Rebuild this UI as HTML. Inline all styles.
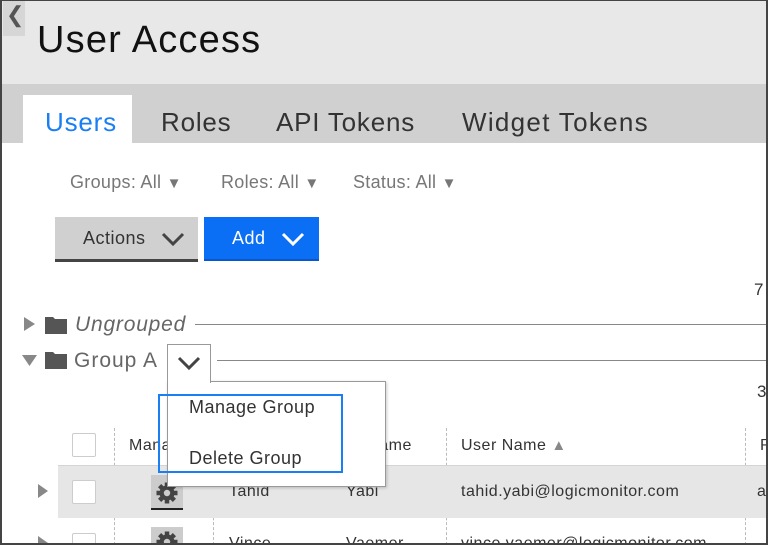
<!DOCTYPE html>
<html><head><style>
*{margin:0;padding:0;box-sizing:border-box}
html,body{width:768px;height:545px;overflow:hidden}
body{background:#fff;font-family:"Liberation Sans",sans-serif;position:relative}
.a{position:absolute;white-space:nowrap}
.frame{position:absolute;left:0;top:0;width:768px;height:545px;border:1px solid #444;border-left-width:2px;border-right-width:2px;border-bottom-width:2px;pointer-events:none;z-index:50}
.cb{position:absolute;width:24px;height:24px;border:1px solid #ccc;border-radius:2px;background:#fff}
.dv{position:absolute;width:0;border-left:1px dashed #bbb}
.t{color:#333;font-size:16px;letter-spacing:0.5px}
.tab{font-size:26px;letter-spacing:0.8px}
</style></head><body>
<div class="a" style="left:0;top:0;width:768px;height:84px;background:#e8e8e8"></div>
<div class="a" style="left:3px;top:0;width:22px;height:36px;background:#d6d6d6"></div>
<div class="a" style="left:6px;top:2px;font-size:22px;color:#555">&#10094;</div>
<div class="a" style="left:37px;top:19px;font-size:38px;letter-spacing:1.2px;color:#111">User Access</div>
<div class="a" style="left:0;top:84px;width:768px;height:59px;background:#d0d0d0"></div>
<div class="a" style="left:23px;top:95px;width:109px;height:48px;background:#fff"></div>
<div class="a tab" style="left:45px;top:107px;color:#1a7ef5">Users</div>
<div class="a tab" style="left:161px;top:107px;color:#333">Roles</div>
<div class="a tab" style="left:276px;top:107px;color:#333">API Tokens</div>
<div class="a tab" style="left:462px;top:107px;color:#333;letter-spacing:1.3px">Widget Tokens</div>

<div class="a" style="left:70px;top:172px;font-size:18px;letter-spacing:0.3px;color:#777">Groups: All <span style="font-size:15px">&#9660;</span></div>
<div class="a" style="left:221px;top:172px;font-size:18px;letter-spacing:0.3px;color:#777">Roles: All <span style="font-size:15px">&#9660;</span></div>
<div class="a" style="left:353px;top:172px;font-size:18px;letter-spacing:0.3px;color:#777">Status: All <span style="font-size:15px">&#9660;</span></div>

<div class="a" style="left:55px;top:217px;width:143px;height:45px;background:#d0d0d0;border-bottom:3px solid #444"></div>
<div class="a" style="left:83px;top:228px;font-size:18px;letter-spacing:0.5px;color:#333">Actions</div>
<svg class="a" style="left:161px;top:231px" width="24" height="16"><path d="M2 3 L12 13 L22 3" stroke="#444" stroke-width="3" fill="none"/></svg>
<div class="a" style="left:204px;top:217px;width:115px;height:44px;background:#0a6ff5;border-bottom:2px solid #0a58c8"></div>
<div class="a" style="left:232px;top:228px;font-size:18px;letter-spacing:0.5px;color:#fff">Add</div>
<svg class="a" style="left:281px;top:231px" width="24" height="16"><path d="M2 3 L12 13 L22 3" stroke="#fff" stroke-width="3" fill="none"/></svg>

<div class="a" style="left:754px;top:280px;font-size:17px;color:#333">7</div>
<svg class="a" style="left:22px;top:316px" width="16" height="16"><path d="M2 1 L13 8 L2 15Z" fill="#888"/></svg>
<svg class="a" style="left:45px;top:315px" width="22" height="19"><path d="M0 2h8l2 2h12v15H0z" fill="#555"/></svg>
<div class="a" style="left:75px;top:313px;font-size:21px;letter-spacing:0.8px;font-style:italic;color:#666">Ungrouped</div>
<div class="a" style="left:195px;top:324px;width:571px;height:1px;background:#888"></div>

<svg class="a" style="left:22px;top:354px" width="16" height="14"><path d="M0 1 L15 1 L7.5 12Z" fill="#888"/></svg>
<svg class="a" style="left:45px;top:350px" width="22" height="19"><path d="M0 2h8l2 2h12v15H0z" fill="#555"/></svg>
<div class="a" style="left:74px;top:349px;font-size:21px;letter-spacing:1px;color:#666">Group A</div>
<div class="a" style="left:217px;top:360px;width:549px;height:1px;background:#888"></div>

<div class="a" style="left:167px;top:381px;width:219px;height:106px;background:#fff;border:1px solid #999;box-shadow:1px 1px 3px rgba(0,0,0,.2);z-index:5"></div>
<div class="a" style="left:167px;top:344px;width:44px;height:39px;background:#fff;border:1px solid #999;border-bottom:none;z-index:6"></div>
<svg class="a" style="left:177px;top:355px;z-index:7" width="24" height="16"><path d="M2 3 L12 13 L22 3" stroke="#444" stroke-width="3" fill="none"/></svg>
<div class="a" style="left:158px;top:394px;width:185px;height:79px;border:2px solid #1a7ef5;z-index:8"></div>
<div class="a" style="left:189px;top:397px;font-size:18px;letter-spacing:0.5px;color:#333;z-index:8">Manage Group</div>
<div class="a" style="left:189px;top:448px;font-size:18px;letter-spacing:0.5px;color:#333;z-index:8">Delete Group</div>

<div class="a" style="left:757px;top:382px;font-size:17px;color:#333">3</div>

<div class="cb" style="left:72px;top:433px"></div>
<div class="dv" style="left:114px;top:428px;height:117px"></div>
<div class="dv" style="left:213px;top:428px;height:117px"></div>
<div class="dv" style="left:446px;top:428px;height:117px"></div>
<div class="dv" style="left:745px;top:428px;height:117px"></div>
<div class="a t" style="left:129px;top:437px">Manage</div>
<div class="a t" style="left:330px;top:437px">Last Name</div>
<div class="a t" style="left:461px;top:437px">User Name <span style="color:#888;font-size:15px">&#9650;</span></div>
<div class="a t" style="left:760px;top:437px">R</div>

<div class="a" style="left:58px;top:465px;width:710px;height:53px;background:#e6e6e6;border-top:1px solid #d4d4d4"></div>
<svg class="a" style="left:37px;top:484px" width="12" height="14"><path d="M1 0 L11 7 L1 14Z" fill="#888"/></svg>
<div class="cb" style="left:72px;top:480px"></div>
<div class="a" style="left:151px;top:475px;width:32px;height:35px;background:#ccc;border-bottom:2px solid #222"></div>
<svg class="a" style="left:155px;top:481px" width="24" height="24" viewBox="0 0 24 24"><g fill="#444"><circle cx="12" cy="12" r="7.5"/><g stroke="#444" stroke-width="4.5"><line x1="12" y1="1.5" x2="12" y2="22.5"/><line x1="1.5" y1="12" x2="22.5" y2="12"/><line x1="4.6" y1="4.6" x2="19.4" y2="19.4"/><line x1="19.4" y1="4.6" x2="4.6" y2="19.4"/></g></g><circle cx="12" cy="12" r="3.2" fill="#ccc"/></svg>
<div class="a t" style="left:229px;top:483px">Tahid</div>
<div class="a t" style="left:346px;top:483px">Yabi</div>
<div class="a t" style="left:461px;top:483px">tahid.yabi@logicmonitor.com</div>
<div class="a t" style="left:757px;top:483px">a</div>

<svg class="a" style="left:37px;top:536px" width="12" height="14"><path d="M1 0 L11 7 L1 14Z" fill="#888"/></svg>
<div class="cb" style="left:72px;top:533px"></div>
<div class="a" style="left:151px;top:527px;width:32px;height:35px;background:#ccc"></div>
<svg class="a" style="left:155px;top:530px" width="24" height="24" viewBox="0 0 24 24"><g fill="#444"><circle cx="12" cy="12" r="7.5"/><g stroke="#444" stroke-width="4.5"><line x1="12" y1="1.5" x2="12" y2="22.5"/><line x1="1.5" y1="12" x2="22.5" y2="12"/><line x1="4.6" y1="4.6" x2="19.4" y2="19.4"/><line x1="19.4" y1="4.6" x2="4.6" y2="19.4"/></g></g><circle cx="12" cy="12" r="3.2" fill="#ccc"/></svg>
<div class="a t" style="left:229px;top:535px">Vince</div>
<div class="a t" style="left:346px;top:535px">Vaemer</div>
<div class="a t" style="left:461px;top:535px">vince.vaemer@logicmonitor.com</div>
<div class="frame"></div>
</body></html>
